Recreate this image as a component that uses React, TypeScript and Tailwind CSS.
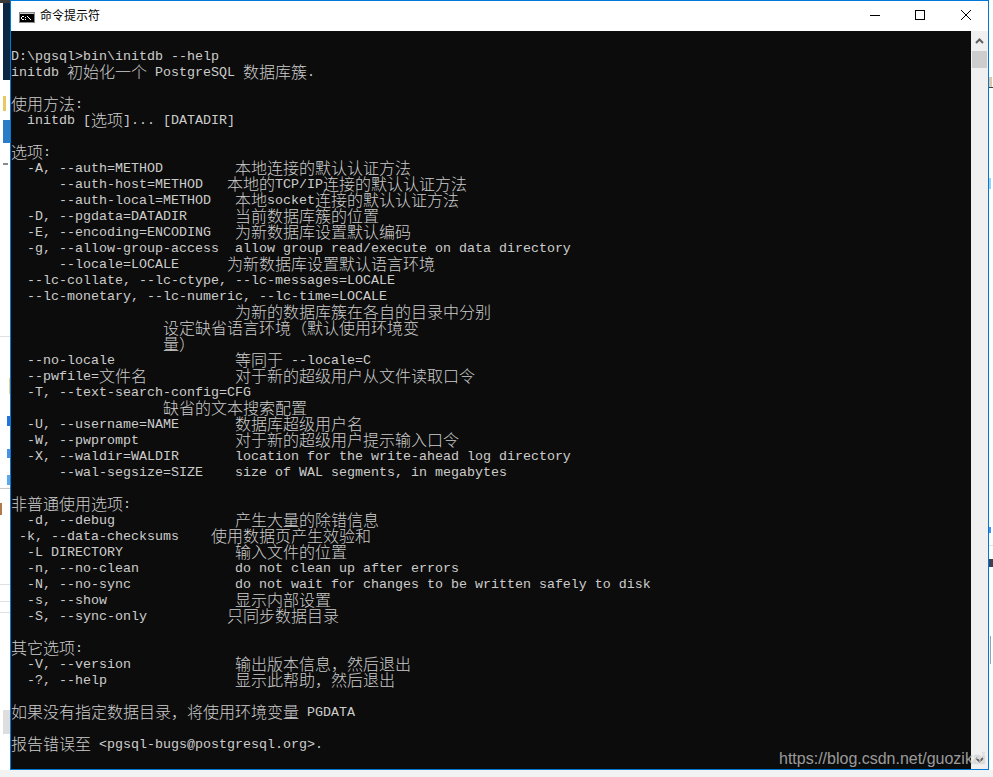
const LINES = [
  "D:\\pgsql>bin\\initdb --help",
  "initdb 初始化一个 PostgreSQL 数据库簇.",
  "",
  "使用方法:",
  "  initdb [选项]... [DATADIR]",
  "",
  "选项:",
  "  -A, --auth=METHOD         本地连接的默认认证方法",
  "      --auth-host=METHOD   本地的TCP/IP连接的默认认证方法",
  "      --auth-local=METHOD   本地socket连接的默认认证方法",
  "  -D, --pgdata=DATADIR      当前数据库簇的位置",
  "  -E, --encoding=ENCODING   为新数据库设置默认编码",
  "  -g, --allow-group-access  allow group read/execute on data directory",
  "      --locale=LOCALE      为新数据库设置默认语言环境",
  "  --lc-collate, --lc-ctype, --lc-messages=LOCALE",
  "  --lc-monetary, --lc-numeric, --lc-time=LOCALE",
  "                            为新的数据库簇在各自的目录中分别",
  "                   设定缺省语言环境（默认使用环境变",
  "                   量）",
  "  --no-locale               等同于 --locale=C",
  "  --pwfile=文件名           对于新的超级用户从文件读取口令",
  "  -T, --text-search-config=CFG",
  "                   缺省的文本搜索配置",
  "  -U, --username=NAME       数据库超级用户名",
  "  -W, --pwprompt            对于新的超级用户提示输入口令",
  "  -X, --waldir=WALDIR       location for the write-ahead log directory",
  "      --wal-segsize=SIZE    size of WAL segments, in megabytes",
  "",
  "非普通使用选项:",
  "  -d, --debug               产生大量的除错信息",
  " -k, --data-checksums    使用数据页产生效验和",
  "  -L DIRECTORY              输入文件的位置",
  "  -n, --no-clean            do not clean up after errors",
  "  -N, --no-sync             do not wait for changes to be written safely to disk",
  "  -s, --show                显示内部设置",
  "  -S, --sync-only          只同步数据目录",
  "",
  "其它选项:",
  "  -V, --version             输出版本信息，然后退出",
  "  -?, --help                显示此帮助，然后退出",
  "",
  "如果没有指定数据目录，将使用环境变量 PGDATA",
  "",
  "报告错误至 <pgsql-bugs@postgresql.org>.",
];

function ConsoleLine({ text }: { text: string }) {
  const parts = text.split(/([\u3000-\u303f\u4e00-\u9fff\uff00-\uffef]+)/);
  return (
    <div className="h-4 whitespace-pre">
      {parts.map((p, i) =>
        i % 2 === 1 ? (
          <span key={i} className="align-[-2px] font-['Noto_Sans_CJK_SC',sans-serif] text-[16px] font-light leading-[0]">
            {p}
          </span>
        ) : (
          <span key={i}>{p}</span>
        ),
      )}
    </div>
  );
}

function CmdIcon() {
  return (
    <svg width="16" height="11" viewBox="0 0 16 11" shapeRendering="crispEdges">
      <rect width="16" height="11" fill="#8a8a8a" />
      <rect x="1" y="1" width="14" height="9" fill="#000" />
      <rect x="1" y="1" width="14" height="1" fill="#c8c8c8" />
      <path d="M3 4h2v1H3zM2 5h1v2H2zM3 7h2v1H3zM6 5h1v1H6zM6 7h1v1H6zM8 4h1v1H8zM9 5h1v1H9zM10 6h1v1h-1zM11 7h1v1h-1z" fill="#fff" />
    </svg>
  );
}

function LeftBackdrop() {
  return (
    <svg className="block shrink-0" width="10" height="770" viewBox="0 0 10 770" shapeRendering="crispEdges">
      <rect width="10" height="3" fill="#3a3a3a" />
      <rect x="3" y="3" width="7" height="77" fill="#0a2744" />
      <rect x="3" y="96" width="3" height="15" fill="#e8c860" />
      <rect x="3" y="120" width="7" height="23" fill="#2b7cc8" />
      <rect x="3" y="163" width="5" height="2" fill="#8a8a8a" />
      <rect x="0" y="336" width="10" height="1" fill="#e0e0e0" />
      <rect x="9" y="378" width="1" height="16" fill="#e4d49a" />
      <rect x="7" y="416" width="3" height="10" fill="#1f74e0" />
      <rect x="7" y="449" width="3" height="9" fill="#4a8fe8" />
      <rect x="7" y="475" width="3" height="10" fill="#5aa8ee" />
      <rect x="0" y="488" width="10" height="1" fill="#c8c8c8" />
      <rect x="0" y="503" width="2" height="12" fill="#b07a4a" />
      <rect x="0" y="584" width="10" height="1" fill="#e0e0e0" />
      <rect x="0" y="601" width="10" height="1" fill="#e0e0e0" />
      <rect x="0" y="612" width="10" height="1" fill="#e0e0e0" />
      <rect x="3" y="710" width="7" height="24" fill="#dedede" />
    </svg>
  );
}

function RightBackdrop() {
  return (
    <svg className="block" width="5" height="770" viewBox="0 0 5 770" shapeRendering="crispEdges">
      <rect width="4" height="13" fill="#e0c8a8" />
      <rect y="13" width="5" height="1" fill="#404040" />
      <rect y="126" width="3" height="14" fill="#9ad4f0" />
      <rect y="562" width="3" height="8" fill="#4a8fe8" />
      <rect y="585" width="5" height="1" fill="#e0e0e0" />
      <rect y="602" width="5" height="10" fill="#404050" />
      <rect y="632" width="5" height="1" fill="#e0e0e0" />
      <rect x="1" y="699" width="1" height="35" fill="#a0a0a0" />
    </svg>
  );
}

export default function App() {
  return (
    <div className="relative flex h-[777px] w-[993px] flex-col overflow-hidden bg-white">
      <div className="flex h-[770px]">
        <LeftBackdrop />

        <div className="flex w-[979px] shrink-0 flex-col border border-[#0078d7] bg-white">
          <div className="flex h-[30px] shrink-0 items-center bg-white pb-[2px]">
            <div className="ml-[8px] mt-[4px] flex items-center">
              <CmdIcon />
            </div>
            <span className="ml-[5px] font-['Noto_Sans_CJK_SC',sans-serif] text-[12px] leading-none text-black">命令提示符</span>
            <div className="ml-auto flex items-center">
              <svg className="mr-[35px]" width="10" height="10" viewBox="0 0 10 10" shapeRendering="crispEdges">
                <path d="M0 5.5h10" stroke="#000" strokeWidth="1" fill="none" />
              </svg>
              <svg className="mr-[36px]" width="10" height="10" viewBox="0 0 10 10" shapeRendering="crispEdges">
                <rect x="0.5" y="0.5" width="9" height="9" stroke="#000" strokeWidth="1" fill="none" />
              </svg>
              <svg className="mr-[17px]" width="10" height="10" viewBox="0 0 10 10">
                <path d="M0 0L10 10M10 0L0 10" stroke="#000" strokeWidth="1" fill="none" />
              </svg>
            </div>
          </div>
          <div className="flex min-h-0 flex-1">
            <div className="min-w-0 flex-1 overflow-hidden bg-[#0c0c0c] pt-[18px] font-['Liberation_Mono',monospace] text-[13.333px] leading-[16px] text-[#cccccc]">
              {LINES.map((l, i) => (
                <ConsoleLine key={i} text={l} />
              ))}
            </div>
            <div className="flex w-[17px] shrink-0 flex-col items-center bg-[#f0f0f0]">
              <div className="flex h-[20px] w-full shrink-0 items-center justify-center">
                <svg width="9" height="6" viewBox="0 0 9 6">
                  <path d="M1 5L4.5 1.5L8 5" stroke="#606060" strokeWidth="2" fill="none" />
                </svg>
              </div>
              <div className="h-[17px] w-[15px] shrink-0 bg-[#cdcdcd]" />
              <div className="mb-[2px] mt-auto flex h-[14px] w-full items-center justify-center">
                <svg width="9" height="6" viewBox="0 0 9 6">
                  <path d="M1 1L4.5 4.5L8 1" stroke="#606060" strokeWidth="2" fill="none" />
                </svg>
              </div>
            </div>
          </div>
        </div>

        <RightBackdrop />
      </div>
      <div className="h-[7px] bg-[#f3f3f3]" />
      <div className="absolute left-[779px] top-[750px] font-['Liberation_Sans',sans-serif] text-[16px] leading-[18px] text-white/60 [text-shadow:0_0_1px_rgba(0,0,0,0.35)]">
        https://blog.csdn.net/guozikai
      </div>
    </div>
  );
}
